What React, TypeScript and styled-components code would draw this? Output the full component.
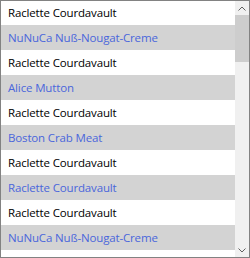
import React from "react";
import styled, { createGlobalStyle } from "styled-components";

const Global = createGlobalStyle`
  html, body { margin: 0; padding: 0; background: #fff; }
  body { font-family: "Open Sans", "Noto Sans", sans-serif; }
`;

const Frame = styled.div`
  box-sizing: border-box;
  width: 250px;
  height: 258px;
  border: 1px solid #828282;
  display: flex;
  background: #fff;
  overflow: hidden;
`;

const List = styled.ul`
  flex: 1;
  margin: -1px 0 0 0;
  padding: 0;
  list-style: none;
  overflow: hidden;
`;

const Row = styled.li<{ $alt: boolean }>`
  height: 25px;
  display: flex;
  align-items: center;
  padding-left: 7px;
  font-size: 11.5px;
  letter-spacing: -0.15px;
  color: ${(p) => (p.$alt ? "#4a66dc" : "#000")};
  background: ${(p) => (p.$alt ? "#d3d3d3" : "#fff")};
  white-space: nowrap;
`;

const ScrollBar = styled.div`
  width: 14px;
  display: flex;
  flex-direction: column;
  background: #f0f0f0;
`;

const ArrowButton = styled.div`
  height: 14px;
  display: flex;
  align-items: center;
  justify-content: center;
`;

const Thumb = styled.div`
  height: 47px;
  background: #cdcdcd;
`;

const Track = styled.div`
  flex: 1;
`;

const Chevron = ({ up }: { up: boolean }) => (
  <svg width="8" height="5" viewBox="0 0 8 5">
    <polyline
      points={up ? "0.5,4.5 4,1 7.5,4.5" : "0.5,0.5 4,4 7.5,0.5"}
      fill="none"
      stroke="#606060"
      strokeWidth="1"
    />
  </svg>
);

const items: { text: string; alt: boolean }[] = [
  { text: "Raclette Courdavault", alt: false },
  { text: "NuNuCa Nuß-Nougat-Creme", alt: true },
  { text: "Raclette Courdavault", alt: false },
  { text: "Alice Mutton", alt: true },
  { text: "Raclette Courdavault", alt: false },
  { text: "Boston Crab Meat", alt: true },
  { text: "Raclette Courdavault", alt: false },
  { text: "Raclette Courdavault", alt: true },
  { text: "Raclette Courdavault", alt: false },
  { text: "NuNuCa Nuß-Nougat-Creme", alt: true },
];

export default function App() {
  return (
    <>
      <Global />
      <Frame>
        <List>
          {items.map((it, i) => (
            <Row key={i} $alt={it.alt}>
              {it.text}
            </Row>
          ))}
        </List>
        <ScrollBar>
          <ArrowButton>
            <Chevron up />
          </ArrowButton>
          <Thumb />
          <Track />
          <ArrowButton>
            <Chevron up={false} />
          </ArrowButton>
        </ScrollBar>
      </Frame>
    </>
  );
}
